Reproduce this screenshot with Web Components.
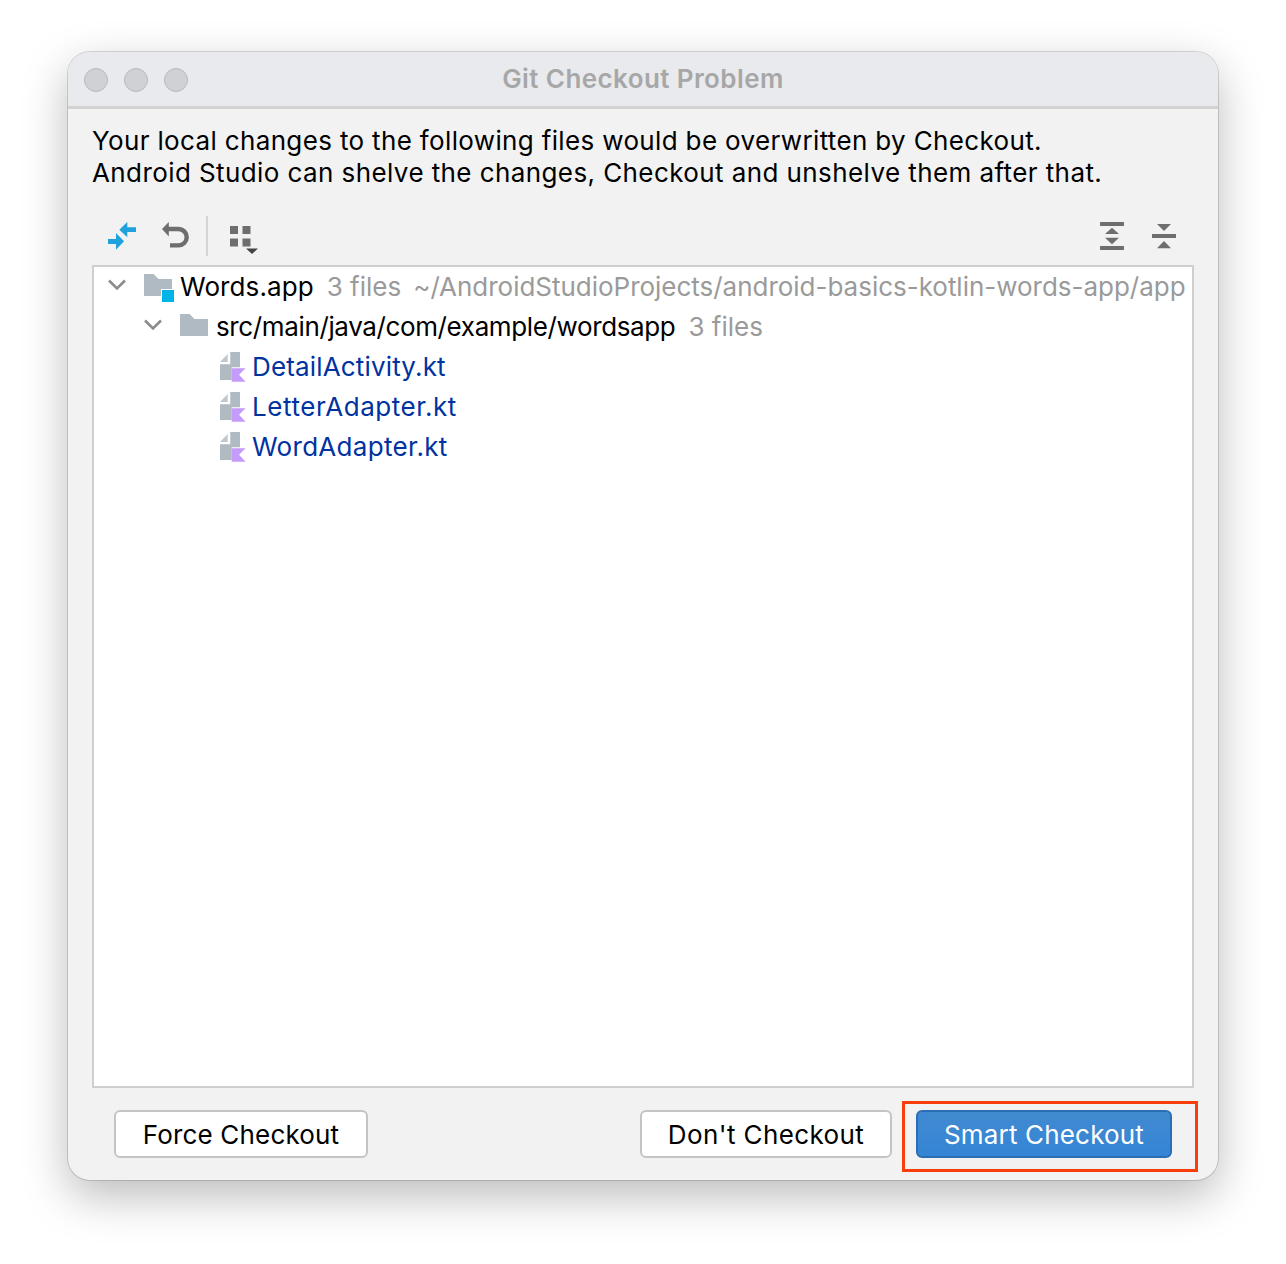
<!DOCTYPE html>
<html><head><meta charset="utf-8"><style>
html,body{margin:0;padding:0;background:#fff;}
body{font-family:Inter,"Liberation Sans",sans-serif;width:1286px;height:1264px;overflow:hidden;}
</style></head><body>
<git-dialog>
  <span slot="title">Git Checkout Problem</span>
  <span slot="message" style="letter-spacing:.35px">Your local changes to the following files would be overwritten by Checkout.</span>
  <span slot="message" style="letter-spacing:.41px;display:block">Android Studio can shelve the changes, Checkout and unshelve them after that.</span>
  <dialog-toolbar slot="toolbar"></dialog-toolbar>
  <tree-row slot="tree" level="0" icon="module" label="Words.app" meta="3 files" path="~/AndroidStudioProjects/android-basics-kotlin-words-app/app"></tree-row>
  <tree-row slot="tree" level="1" icon="folder" label="src/main/java/com/example/wordsapp" meta="3 files" ls="-.37"></tree-row>
  <tree-row slot="tree" level="2" icon="kotlin" label="DetailActivity.kt" modified ls=".16"></tree-row>
  <tree-row slot="tree" level="2" icon="kotlin" label="LetterAdapter.kt" modified ls=".55"></tree-row>
  <tree-row slot="tree" level="2" icon="kotlin" label="WordAdapter.kt" modified ls=".3"></tree-row>
  <dialog-button slot="left" style="width:254px">Force Checkout</dialog-button>
  <dialog-button slot="right" style="width:252px;letter-spacing:.4px">Don't Checkout</dialog-button>
  <dialog-button slot="primary" primary style="width:256px">Smart Checkout</dialog-button>
</git-dialog>
<script>
function def(name, css, html){
  customElements.define(name, class extends HTMLElement{
    constructor(){super();const r=this.attachShadow({mode:'open'});r.innerHTML='<style>'+css+'</style>'+html;}
  });
}
def('git-dialog',`
:host{display:block;box-sizing:border-box;width:1286px;height:1264px;padding:52px 68px 84px;}
.win{box-sizing:border-box;width:1150px;height:1128px;background:#f2f2f2;border-radius:22px;display:flex;flex-direction:column;overflow:hidden;
 box-shadow:0 0 0 1px rgba(0,0,0,.14),0 16px 46px rgba(0,0,0,.27);}
.title{flex:none;height:54px;background:#e9eaed;display:grid;grid-template-columns:1fr auto 1fr;align-items:center;border-bottom:3px solid #d2d2d2;}
.lights{display:flex;gap:16px;padding-left:16px;margin-top:2px;}
.lights i{width:24px;height:24px;box-sizing:border-box;border-radius:50%;background:#d0d1d4;border:1px solid #b9babd;}
.t{font:600 26px Inter,"Liberation Sans",sans-serif;color:#a7a7a7;margin-top:-1px;letter-spacing:.4px}
.body{flex:1;display:flex;flex-direction:column;padding:16px 24px 0 24px;min-height:0;}
.msg{font-size:26px;line-height:32px;color:#000;white-space:nowrap;height:64px;}
.tree{box-sizing:border-box;height:823px;background:#fff;border:2px solid #cfcfcf;display:flex;flex-direction:column;overflow:hidden;}
.foot{flex:none;display:flex;align-items:flex-start;padding:13px 0 0 22px;}
.foot>slot::slotted(*){margin-top:9px}
.sp{flex:1}
.right{display:flex;align-items:flex-start;gap:10px;margin-right:-4px;}
.right>slot::slotted(*){margin-top:9px}
.mark{box-sizing:border-box;border:3px solid #f83e0a;padding:6px 23px 11px 11px;display:flex;}
`,`<div class="win">
<div class="title"><div class="lights"><i></i><i></i><i></i></div><div class="t"><slot name="title"></slot></div><div></div></div>
<div class="body">
 <div class="msg"><slot name="message"></slot></div>
 <slot name="toolbar"></slot>
 <div class="tree"><slot name="tree"></slot></div>
 <div class="foot"><slot name="left"></slot><div class="sp"></div><div class="right"><slot name="right"></slot><div class="mark"><slot name="primary"></slot></div></div></div>
</div></div>`);

def('dialog-toolbar',`
:host{display:flex;align-items:center;height:76px;padding:17px 0 0 16px;box-sizing:border-box;}
svg{display:block;flex:none}
.sep{width:2px;height:40px;background:#d4d4d4;margin:0 22px 0 16px;}
.sp{flex:1}
`,`
<svg width="28" height="28" viewBox="0 0 28 28" fill="#1ea1dc" style="margin-right:26px"><path d="M19.300 0v5.300H28V10H19.300v5.300L11.300 7.700z"/><path d="M8 11v6H0v5H8v5.700L16 19.300z"/></svg>
<svg width="28" height="28" viewBox="0 0 28 28" fill="none"><path d="M0 7 6.800 0V14.500z" fill="#6e6e6e"/><path d="M6 7H16.500a8.200 8.200 0 0 1 0 16.400H8" stroke="#6e6e6e" stroke-width="4.400"/></svg>
<div class="sep"></div>
<svg width="28" height="28" viewBox="0 0 28 28" fill="#6e6e6e" style="margin-top:8px"><rect width="8" height="8"/><rect x="12.500" width="8" height="8"/><rect y="12.500" width="8" height="8"/><rect x="12.500" y="12.500" width="8" height="8"/><path d="M16 22.500h12l-6 5.500z" fill="#444"/></svg>
<div class="sp"></div>
<svg width="24" height="28" viewBox="0 0 24 28" fill="#6e6e6e" style="margin-right:28px"><rect width="24" height="4"/><rect y="24" width="24" height="4"/><path d="M12 5.700 19 12H5z"/><path d="M12 22.300 5 15.700H19z"/></svg>
<svg width="24" height="28" viewBox="0 0 24 28" fill="#6e6e6e" style="margin-right:18px"><rect y="12" width="24" height="4"/><path d="M5 2H19L12 9z"/><path d="M5 26.300H19L12 19z"/></svg>
`);

const ICONS={
 module:`<svg width="30" height="30" viewBox="0 0 30 30"><path d="M0 0H9.500L14.500 5H28V15H17V22H0z" fill="#afbac2"/><rect x="18" y="16" width="12" height="12" fill="#00b4e6"/></svg>`,
 folder:`<svg width="30" height="30" viewBox="0 0 30 30"><path d="M0 0H9.500L14.500 5H28V22H0z" fill="#afbac2"/></svg>`,
 kotlin:`<svg width="28" height="30" viewBox="0 0 28 30"><path d="M0 10 7.700 2V10z" fill="#afbac2" opacity=".8"/><path d="M10.300 0H20V15.300H11.700V28H0V12.300H10.300z" fill="#afbac2"/><path d="M11.700 16.300H25.700L19 22.700 25.700 29.700H11.700z" fill="#c59cfb"/></svg>`
};
customElements.define('tree-row',class extends HTMLElement{
  constructor(){super();this.attachShadow({mode:'open'});}
  connectedCallback(){
    const lvl=+this.getAttribute('level');
    const chevron=lvl<2?`<svg class="chev" width="20" height="12" viewBox="0 0 20 12"><path d="M2 1.500 10 9.500 18 1.500" fill="none" stroke="#8c8c8c" stroke-width="2.600"/></svg>`:'';
    const m=this.getAttribute('meta'),p=this.getAttribute('path'),ls=this.getAttribute('ls')||'.1';
    this.shadowRoot.innerHTML=`<style>
    :host{display:flex;align-items:center;height:40px;flex:none;box-sizing:border-box;white-space:nowrap;font-size:26px;color:#000;}
    .chev{flex:none;margin-right:17px;margin-top:-5px}
    .ic{flex:none;display:block;margin-right:${[6,6,4][lvl]}px;margin-top:${lvl<2?4:0}px}
    .ic svg{display:block}
    .t{margin-top:-2px;display:flex;white-space:pre}
    .m{color:#9a9a9a;margin-left:13px}
    .p{color:#9a9a9a;margin-left:12px;letter-spacing:-.02px}
    .l{letter-spacing:${ls}px}
    :host([modified]) .l{color:#0032a0}
    </style><div style="width:${[13,49,126][lvl]}px;flex:none"></div>${chevron}<span class="ic">${ICONS[this.getAttribute('icon')]}</span><div class="t"><span class="l">${this.getAttribute('label')}</span>${m?`<span class="m">${m}</span>`:''}${p?`<span class="p">${p}</span>`:''}</div>`;
  }
});
def('dialog-button',`
:host{display:flex;box-sizing:border-box;height:48px;align-items:center;justify-content:center;background:#fff;border:2px solid #c4c4c4;border-radius:6px;font-size:26px;color:#000;letter-spacing:.17px;white-space:nowrap;}
:host([primary]){background:linear-gradient(#418ad0,#3585d5);border-color:#2a6fb5;color:#fff;}
`,`<slot></slot>`);
</script>
</body></html>
